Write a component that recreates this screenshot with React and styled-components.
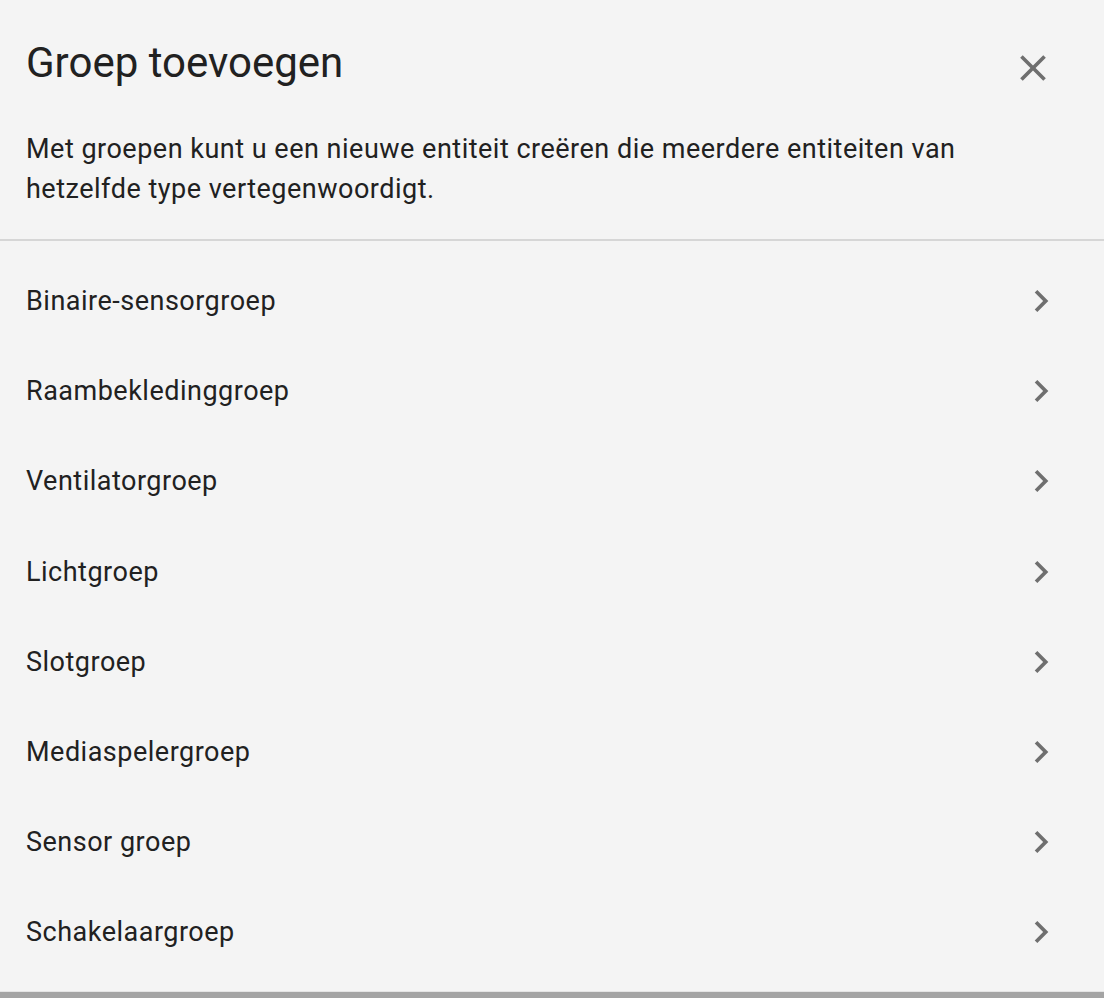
import React from 'react';
import styled, { createGlobalStyle } from 'styled-components';

const GlobalStyle = createGlobalStyle`
  html, body {
    margin: 0;
    padding: 0;
    background: #f4f4f4;
  }
  body {
    font-family: Roboto, "Noto Sans", "Liberation Sans", sans-serif;
    color: #212121;
  }
`;

const Dialog = styled.div`
  height: 998px;
  display: flex;
  flex-direction: column;
  background: #f4f4f4;
  overflow: hidden;
`;

const Header = styled.header`
  display: flex;
  align-items: flex-start;
  justify-content: space-between;
  padding: 37px 49px 0 26px;
`;

const Title = styled.h2`
  margin: 0;
  font-size: 42px;
  font-weight: 400;
  line-height: 52px;
  letter-spacing: 0;
`;

const CloseButton = styled.button`
  width: 44px;
  height: 44px;
  margin-top: 9px;
  padding: 0;
  border: 0;
  background: none;
  color: #6f6f6f;
  display: flex;
  align-items: center;
  justify-content: center;
  cursor: pointer;
  svg {
    width: 44px;
    height: 44px;
  }
`;

const Description = styled.p`
  margin: 0;
  padding: 39px 60px 30px 26px;
  font-size: 27px;
  line-height: 40px;
  letter-spacing: 0.5px;
  border-bottom: 2px solid #d6d6d6;
`;

const List = styled.ul`
  list-style: none;
  margin: 0;
  padding: 15px 0 0;
  flex: 1;
`;

const Item = styled.li`
  height: 90.2px;
  display: flex;
  align-items: center;
  justify-content: space-between;
  padding: 0 41px 0 26px;
  font-size: 27px;
  letter-spacing: 0.5px;
  cursor: pointer;
`;

const Chevron = styled.svg`
  width: 44px;
  height: 44px;
  color: #6f6f6f;
`;

const BottomStrip = styled.div`
  height: 6px;
  background: #a4a4a4;
  border-top: 1px solid #e4e4e4;
`;

const groups = [
  'Binaire-sensorgroep',
  'Raambekledinggroep',
  'Ventilatorgroep',
  'Lichtgroep',
  'Slotgroep',
  'Mediaspelergroep',
  'Sensor groep',
  'Schakelaargroep',
];

const App = () => {
  return (
    <>
      <GlobalStyle />
      <Dialog>
        <Header>
          <Title>Groep toevoegen</Title>
          <CloseButton aria-label="Sluiten">
            <svg viewBox="0 0 24 24">
              <path fill="currentColor" d="M19,6.41L17.59,5L12,10.59L6.41,5L5,6.41L10.59,12L5,17.59L6.41,19L12,13.41L17.59,19L19,17.59L13.41,12L19,6.41Z" />
            </svg>
          </CloseButton>
        </Header>
        <Description>
          Met groepen kunt u een nieuwe entiteit creëren die meerdere entiteiten van
          hetzelfde type vertegenwoordigt.
        </Description>
        <List>
          {groups.map(name => (
            <Item key={name}>
              <span>{name}</span>
              <Chevron viewBox="0 0 24 24">
                <path fill="currentColor" d="M8.59,16.58L13.17,12L8.59,7.41L10,6L16,12L10,18L8.59,16.58Z" />
              </Chevron>
            </Item>
          ))}
        </List>
        <BottomStrip />
      </Dialog>
    </>
  );
};

export default App;
